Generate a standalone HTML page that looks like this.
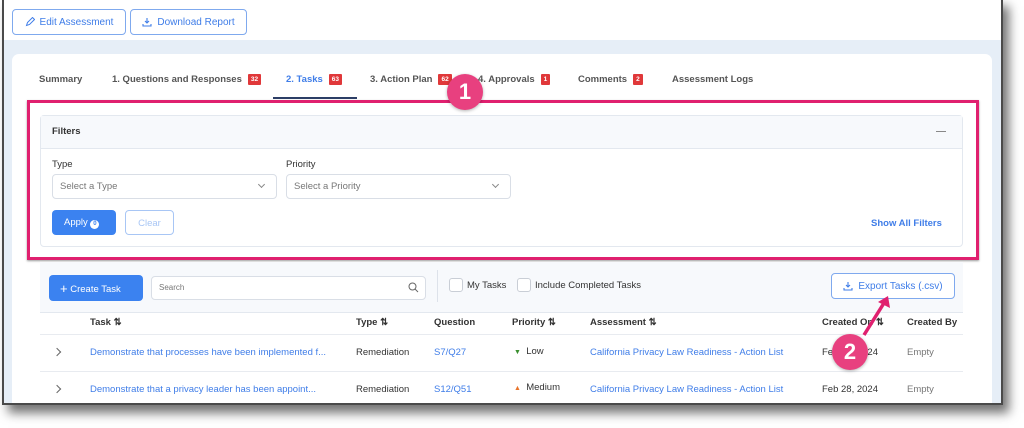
<!DOCTYPE html><html><head><style>
*{box-sizing:border-box;margin:0;padding:0}
body{width:1024px;height:428px;background:#fff;font-family:"Liberation Sans",sans-serif;position:relative;overflow:hidden;font-size:10px}
.win{position:absolute;left:2px;top:-2px;width:1001px;height:407px;border:2px solid #4a4a4a;background:#e6eef7;box-shadow:6px 8px 10px rgba(0,0,0,.55);overflow:hidden}
.in{position:absolute;left:-2px;top:0;width:1001px;height:407px}
.top{position:absolute;left:0;top:0;right:0;height:40px;background:#fff}
.btn{position:absolute;border:1px solid #7fa9ee;border-radius:4px;color:#3f7de8;font-weight:bold;font-size:10px;display:flex;align-items:center;justify-content:center;gap:5px;background:#fff}
.card{position:absolute;left:10px;top:54px;width:980px;height:360px;background:#fff;border-radius:7px}
.tab{position:absolute;top:74px;font-weight:bold;font-size:9.5px;color:#555}
.bd{display:inline-block;background:#e0383a;color:#fff;font-size:6.5px;padding:2px 3px;border-radius:1px;margin-left:6px;vertical-align:1px;line-height:7px}
.abs{position:absolute}
.sel{position:absolute;top:174px;height:25px;border:1px solid #d9dee6;border-radius:4px;color:#777;font-size:9.5px;padding:6px 7px}
.th{position:absolute;top:317px;font-weight:bold;font-size:9.5px;color:#333}
.td{position:absolute;font-size:9.5px;color:#333}
.lk{color:#3f7de8}
.cb{position:absolute;top:278px;width:14px;height:14px;border:1px solid #c9ced6;border-radius:3px;background:#fff}
.circ{position:absolute;width:36px;height:36px;border-radius:50%;background:#e8407f;color:#fff;font-weight:bold;font-size:22px;text-align:center;line-height:36px;box-shadow:0 1px 3px rgba(0,0,0,.3)}
.chev{position:absolute;width:6px;height:6px;border-right:1.3px solid #666;border-bottom:1.3px solid #666}
</style></head><body>
<div class="win"><div class="in">
 <div class="top"></div>
 <div class="btn" style="left:10px;top:9px;width:114px;height:26px;font-weight:normal"><svg width="10" height="10" viewBox="0 0 10 10"><path d="M1.5 8.5l1-3 5-5 2 2-5 5z" stroke="#3f7de8" fill="none" stroke-width="1"/></svg>Edit Assessment</div>
 <div class="btn" style="left:128px;top:9px;width:117px;height:26px;font-weight:normal"><svg width="10" height="10" viewBox="0 0 10 10"><path d="M5 1v5M3 4l2 2 2-2M1 7v2h8V7" stroke="#3f7de8" fill="none" stroke-width="1.1"/></svg>Download Report</div>
 <div class="card"></div>
 <div class="tab" style="left:37px">Summary</div>
 <div class="tab" style="left:110px">1. Questions and Responses<span class="bd">32</span></div>
 <div class="tab" style="left:284px;color:#3f7de8">2. Tasks<span class="bd">63</span></div>
 <div class="abs" style="left:271px;top:97px;width:84px;height:2px;background:#2c3e66"></div>
 <div class="tab" style="left:368px">3. Action Plan<span class="bd">62</span></div>
 <div class="tab" style="left:476px">4. Approvals<span class="bd">1</span></div>
 <div class="tab" style="left:576px">Comments<span class="bd">2</span></div>
 <div class="tab" style="left:670px">Assessment Logs</div>
 <div class="abs" style="left:38px;top:115px;width:923px;height:132px;border:1px solid #e3e8ef;border-radius:4px;background:#fff"></div>
 <div class="abs" style="left:39px;top:116px;width:921px;height:33px;background:#f7f9fc;border-bottom:1px solid #e3e8ef"></div>
 <div class="abs" style="left:50px;top:126px;font-weight:bold;font-size:9.5px;color:#333">Filters</div>
 <div class="abs" style="left:934px;top:131px;width:10px;height:1px;background:#888"></div>
 <div class="abs" style="left:50px;top:159px;font-size:9.5px;color:#333">Type</div>
 <div class="abs" style="left:284px;top:159px;font-size:9.5px;color:#333">Priority</div>
 <div class="sel" style="left:50px;width:225px">Select a Type<span class="chev" style="right:12px;top:7px;transform:rotate(45deg);width:5px;height:5px;border-color:#888"></span></div>
 <div class="sel" style="left:284px;width:225px">Select a Priority<span class="chev" style="right:12px;top:7px;transform:rotate(45deg);width:5px;height:5px;border-color:#888"></span></div>
 <div class="abs" style="left:50px;top:210px;width:64px;height:25px;background:#3b82f0;border-radius:4px;color:#fff;font-size:9.5px;padding:7px 0 0 12px">Apply <span style="display:inline-block;width:9px;height:9px;border-radius:50%;background:#fff;color:#3b82f0;font-size:6px;text-align:center;line-height:9px;font-weight:bold;vertical-align:0">0</span></div>
 <div class="abs" style="left:123px;top:210px;width:49px;height:25px;border:1px solid #a8c6f5;border-radius:4px;color:#a8c6f5;font-size:9.5px;text-align:center;padding-top:7px">Clear</div>
 <div class="abs lk" style="left:869px;top:218px;font-size:9.5px;font-weight:bold">Show All Filters</div>
 <div class="abs" style="left:25px;top:100px;width:952px;height:160px;border:3px solid #e0206f;box-shadow:0 1px 2px rgba(0,0,0,.4)"></div>
 <div class="abs" style="left:38px;top:262px;width:923px;height:50px;background:#f7f9fc"></div>
 <div class="abs" style="left:47px;top:275px;width:94px;height:26px;background:#3b82f0;border-radius:4px;color:#fff;font-size:9.5px;padding:6px 0 0 11px"><span style="font-size:13px;vertical-align:-1px">+</span> Create Task</div>
 <div class="abs" style="left:149px;top:276px;width:275px;height:24px;border:1px solid #d9dee6;border-radius:4px;background:#fff;color:#777;font-size:8px;padding:6px 7px">Search<svg style="position:absolute;right:6px;top:5px" width="11" height="11" viewBox="0 0 11 11"><circle cx="4.5" cy="4.5" r="3.5" stroke="#666" fill="none"/><path d="M7 7l3 3" stroke="#666"/></svg></div>
 <div class="abs" style="left:435px;top:270px;width:1px;height:32px;background:#dde2ea"></div>
 <div class="cb" style="left:447px"></div><div class="td" style="left:465px;top:280px">My Tasks</div>
 <div class="cb" style="left:515px"></div><div class="td" style="left:533px;top:280px">Include Completed Tasks</div>
 <div class="btn" style="left:829px;top:273px;width:124px;height:26px;font-weight:normal"><svg width="10" height="10" viewBox="0 0 10 10"><path d="M5 1v5M3 4l2 2 2-2M1 7v2h8V7" stroke="#3f7de8" fill="none" stroke-width="1.1"/></svg>Export Tasks (.csv)</div>
 <div class="abs" style="left:38px;top:312px;width:923px;height:1px;background:#e3e8ef"></div>
 <div class="th" style="left:88px">Task ⇅</div><div class="th" style="left:354px">Type ⇅</div><div class="th" style="left:432px">Question</div>
 <div class="th" style="left:510px">Priority ⇅</div><div class="th" style="left:588px">Assessment ⇅</div><div class="th" style="left:820px">Created On ⇅</div><div class="th" style="left:905px">Created By</div>
 <div class="abs" style="left:38px;top:334px;width:923px;height:1px;background:#e8ebf0"></div>
 <div class="abs" style="left:38px;top:371px;width:923px;height:1px;background:#e8ebf0"></div>
 <div class="chev" style="left:52px;top:349px;transform:rotate(-45deg)"></div>
 <div class="td lk" style="left:88px;top:347px">Demonstrate that processes have been implemented f...</div>
 <div class="td" style="left:354px;top:347px">Remediation</div><div class="td lk" style="left:432px;top:347px">S7/Q27</div>
 <div class="td" style="left:512px;top:346px"><span style="color:#3a8f2e;font-size:7px">▼</span>&nbsp; Low</div>
 <div class="td lk" style="left:588px;top:347px">California Privacy Law Readiness - Action List</div>
 <div class="td" style="left:820px;top:347px">Feb 28, 2024</div><div class="td" style="left:905px;top:347px;color:#777">Empty</div>
 <div class="chev" style="left:52px;top:386px;transform:rotate(-45deg)"></div>
 <div class="td lk" style="left:88px;top:384px">Demonstrate that a privacy leader has been appoint...</div>
 <div class="td" style="left:354px;top:384px">Remediation</div><div class="td lk" style="left:432px;top:384px">S12/Q51</div>
 <div class="td" style="left:512px;top:382px"><span style="color:#e8742b;font-size:7px">▲</span>&nbsp; Medium</div>
 <div class="td lk" style="left:588px;top:384px">California Privacy Law Readiness - Action List</div>
 <div class="td" style="left:820px;top:384px">Feb 28, 2024</div><div class="td" style="left:905px;top:384px;color:#777">Empty</div>
 <div class="circ" style="left:445px;top:74px">1</div>
 <svg class="abs" style="left:0;top:0" width="1000" height="410"><path d="M862 335 L882 303" stroke="#e0206f" stroke-width="3.5"/><path d="M876 302 L886 296 L888 308 Z" fill="#e0206f"/></svg>
 <div class="circ" style="left:830px;top:334px">2</div>
</div></div>
</body></html>
